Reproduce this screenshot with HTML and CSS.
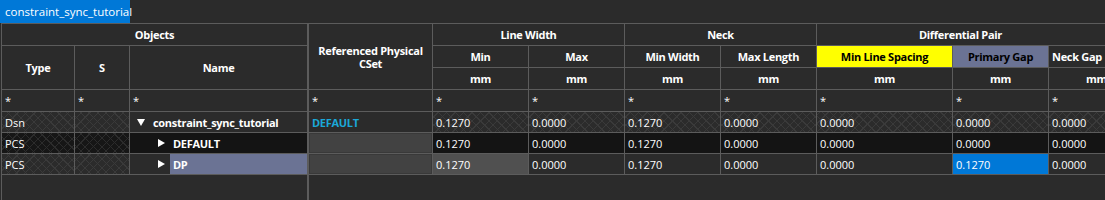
FILE: index.html
```html
<!DOCTYPE html>
<html>
<head>
<meta charset="utf-8">
<link rel="stylesheet" href="styles.css">
</head>
<body>
<div class="tabbar"><div class="tab">constraint_sync_tutorial</div></div>
<div class="view">
  <div class="grid">
    <div class="c h b span-obj">Objects</div>
    <div class="c h b ref-h frz">Referenced Physical<br>CSet</div>
    <div class="c h b span-lw">Line Width</div>
    <div class="c h b span-neck">Neck</div>
    <div class="c h b span-dp">Differential Pair</div>

    <div class="c h b tall">Type</div>
    <div class="c h b tall">S</div>
    <div class="c h b tall frz">Name</div>
    <div class="c h b">Min</div>
    <div class="c h b">Max</div>
    <div class="c h b">Min Width</div>
    <div class="c h b">Max Length</div>
    <div class="c h b yellow">Min Line Spacing</div>
    <div class="c h b slate-h">Primary Gap</div>
    <div class="c h b left">Neck Gap</div>

    <div class="c h b">mm</div>
    <div class="c h b">mm</div>
    <div class="c h b">mm</div>
    <div class="c h b">mm</div>
    <div class="c h b">mm</div>
    <div class="c h b">mm</div>
    <div class="c h b last-mm">mm</div>

    <div class="c f">*</div>
    <div class="c f">*</div>
    <div class="c f frz">*</div>
    <div class="c f">*</div>
    <div class="c f">*</div>
    <div class="c f">*</div>
    <div class="c f">*</div>
    <div class="c f">*</div>
    <div class="c f">*</div>
    <div class="c f">*</div>
    <div class="c f">*</div>

    <div class="c d hatch">Dsn</div>
    <div class="c d hatch"></div>
    <div class="c d b frz tree0"><span class="tri down"></span>constraint_sync_tutorial</div>
    <div class="c d b cyan">DEFAULT</div>
    <div class="c d hatch">0.1270</div>
    <div class="c d hatch">0.0000</div>
    <div class="c d hatch">0.1270</div>
    <div class="c d hatch">0.0000</div>
    <div class="c d hatch">0.0000</div>
    <div class="c d hatch">0.0000</div>
    <div class="c d hatch">0.0000</div>

    <div class="c d hatch-dark">PCS</div>
    <div class="c d hatch-dark"></div>
    <div class="c d b frz dark tree1"><span class="tri right"></span>DEFAULT</div>
    <div class="c d refbox"></div>
    <div class="c d dark">0.1270</div>
    <div class="c d dark">0.0000</div>
    <div class="c d dark">0.1270</div>
    <div class="c d dark">0.0000</div>
    <div class="c d dark">0.0000</div>
    <div class="c d dark">0.0000</div>
    <div class="c d dark">0.0000</div>

    <div class="c d hatch">PCS</div>
    <div class="c d hatch"></div>
    <div class="c d b frz tree1 sel-name"><span class="tri right"></span><span class="selbox">DP</span></div>
    <div class="c d refbox"></div>
    <div class="c d graycell">0.1270</div>
    <div class="c d">0.0000</div>
    <div class="c d">0.1270</div>
    <div class="c d">0.0000</div>
    <div class="c d">0.0000</div>
    <div class="c d blue">0.1270</div>
    <div class="c d">0.0000</div>

    <div class="fill-left"></div>
    <div class="fill-right"></div>
  </div>
</div>
</body>
</html>
```

FILE: styles.css
```css
html, body {
  margin: 0;
  padding: 0;
  background: #2b2b2b;
  width: 1105px;
  height: 200px;
  overflow: hidden;
  font-family: "Open Sans", "Noto Sans", sans-serif;
  font-size: 11px;
  color: #ffffff;
}
.tabbar {
  height: 23px;
  display: flex;
}
.tab {
  width: 130px;
  height: 23px;
  background: #0078d7;
  color: #fff;
  font-size: 11.5px;
  line-height: 23px;
  padding-left: 5px;
  box-sizing: border-box;
  white-space: nowrap;
}
.view {
  width: 1105px;
  height: 177px;
  overflow: hidden;
  padding-left: 1px;
  box-sizing: border-box;
}
.grid {
  display: grid;
  grid-template-columns: 73px 55px 179px 124px 96px 96px 96px 96px 136px 96px 96px;
  grid-template-rows: 22px 22px 22px 22px 21px 21px 21px 25px;
  border-left: 1px solid #5c5c5c;
  border-top: 1px solid #5c5c5c;
  width: 1144px;
}
.c {
  border-right: 1px solid #5c5c5c;
  border-bottom: 1px solid #5c5c5c;
  box-sizing: border-box;
  display: flex;
  align-items: center;
  white-space: nowrap;
  overflow: hidden;
  padding-left: 3px;
}
.b { font-weight: 700; letter-spacing: -0.3px; }
.h {
  justify-content: center;
  padding-left: 0;
  text-align: center;
}
.h.left { justify-content: flex-start; padding-left: 3px; }
.last-mm { justify-content: flex-start; padding-left: 37px; }
.frz { border-right: 2px solid #5c5c5c; }
.span-obj { grid-column: 1 / 4; border-right: 2px solid #5c5c5c; }
.ref-h { grid-row: 1 / 4; grid-column: 4; border-right: 1px solid #5c5c5c; line-height: 13px; }
.span-lw { grid-column: 5 / 7; }
.span-neck { grid-column: 7 / 9; }
.span-dp { grid-column: 9 / 12; padding-right: 40px; }
.tall { grid-row: 2 / 4; }
.yellow { background: #ffff00; color: #000; }
.slate-h { background: #6b7394; color: #000; }
.f { align-items: center; padding-left: 3px; font-size: 11px; }
.d { padding-left: 3px; }
.hatch {
  background-color: #2b2b2b;
  background-image:
    repeating-linear-gradient(45deg, transparent 0 5px, #3a3a3a 5px 6px),
    repeating-linear-gradient(-45deg, transparent 0 5px, #3a3a3a 5px 6px);
}
.hatch-dark {
  background-color: #161616;
  background-image:
    repeating-linear-gradient(45deg, transparent 0 5px, #2c2c2c 5px 6px),
    repeating-linear-gradient(-45deg, transparent 0 5px, #2c2c2c 5px 6px);
}
.dark { background: #141414; }
.cyan { color: #1ba8d8; }
.refbox { background: #424242; box-shadow: inset 0 0 0 1px #393939; }
.graycell { background: #505050; }
.blue { background: #0078d7; }
.tri {
  display: inline-block;
  width: 0;
  height: 0;
  margin-right: 8px;
}
.tri.down {
  border-left: 4px solid transparent;
  border-right: 4px solid transparent;
  border-top: 7px solid #fff;
}
.tri.right {
  border-top: 4px solid transparent;
  border-bottom: 4px solid transparent;
  border-left: 7px solid #fff;
}
.tree0 { padding-left: 7px; }
.tree1 { padding-left: 28px; }
.sel-name { padding-right: 0; align-items: stretch; }
.sel-name .tri { align-self: center; margin-right: 5px; }
.selbox {
  flex: 1;
  background: #6b7394;
  display: flex;
  align-items: center;
  padding-left: 3px;
}
.fill-left {
  grid-column: 1 / 4;
  border-right: 2px solid #5c5c5c;
}
.fill-right {
  grid-column: 4 / 12;
}
```
